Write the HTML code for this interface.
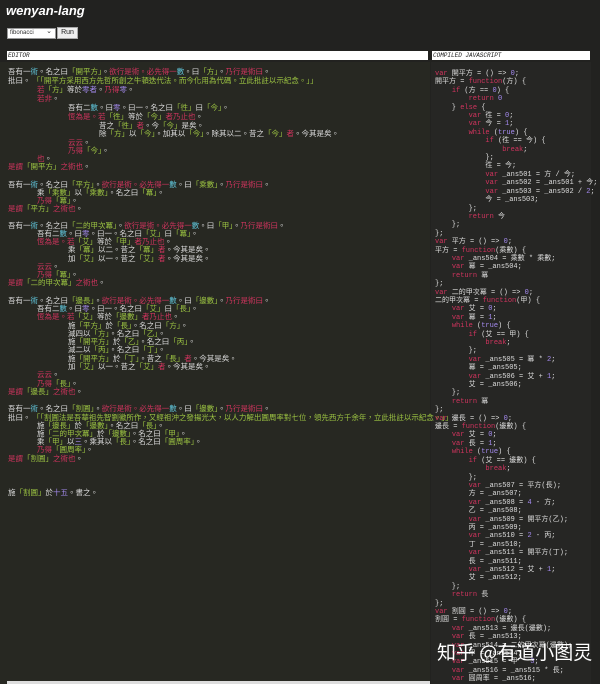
<!DOCTYPE html>
<html><head><meta charset="utf-8"><style>
*{margin:0;padding:0;box-sizing:border-box}
body{width:600px;height:684px;overflow:hidden;background:#222220;font-family:"Liberation Sans","Noto Sans CJK TC",sans-serif;color:#ddd;position:relative}
h1{position:absolute;left:6px;top:3px;font-size:13px;font-style:italic;font-weight:bold;color:#fff}
.sel{position:absolute;left:7px;top:28px;width:49px;height:11px;background:#fff;border:1px solid #999;font-size:6px;color:#333;padding-left:2px;line-height:9px}
.sel:after{content:"⌄";position:absolute;right:3px;top:-2px;font-size:7px}
.run{position:absolute;left:57px;top:27px;width:21px;height:12px;background:#eee;border:1px solid #aaa;font-size:7px;color:#222;text-align:center;line-height:10px}
.bar{position:absolute;top:51px;height:9px;background:#fff;font-family:"Liberation Mono",monospace;font-style:italic;font-size:6px;color:#222;line-height:9px;padding-left:1px}
#ed{position:absolute;left:0;top:62px;width:430px;height:622px;background:#272822}
#js{position:absolute;left:431px;top:62px;width:160px;height:622px;background:#262624}
.l{position:absolute;left:8px;font-size:7.5px;white-space:pre;line-height:8px;color:#ddd}
.j{position:absolute;left:435px;font-family:"Liberation Mono","Noto Sans CJK TC",monospace;font-size:7px;white-space:pre;line-height:8.4px;color:#ddd}
.k{color:#d1345e}.s{color:#9cc442}.n{color:#a58bf0}.t{color:#5fc3d8}
.i1{left:37px}.i2{left:68px}.i3{left:99px}
.wm{position:absolute;left:437px;top:638px;font-size:19px;color:#fff;font-family:"Noto Sans CJK SC",sans-serif}
.bot{position:absolute;left:7px;top:681px;width:423px;height:3px;background:#ddd}
</style></head><body>
<h1>wenyan-lang</h1>
<div class="sel">fibonacci</div><div class="run">Run</div>
<div id="ed"></div><div id="js"></div>
<div class="bar" style="left:7px;width:421px">EDITOR</div>
<div class="bar" style="left:432px;width:158px">COMPILED JAVASCRIPT</div>

<div class="l" style="top:68px">吾有一<span class="t">術</span>。名之曰<span class="s">「開平方」</span>。<span class="k">欲行是術。必先得一</span><span class="t">數</span>。曰<span class="s">「方」</span>。<span class="k">乃行是術曰</span>。</div>
<div class="l" style="top:77px">批曰。 <span class="s">「「開平方采用西方先哲所創之牛頓迭代法。而今化用為代碼。立此批註以示紀念。」」</span></div>
<div class="l i1" style="top:86px"><span class="k">若</span><span class="s">「方」</span>等於<span class="n">零者</span>。<span class="k">乃得</span><span class="n">零</span>。</div>
<div class="l i1" style="top:95px"><span class="k">若非</span>。</div>
<div class="l i2" style="top:104px">吾有二<span class="t">數</span>。曰<span class="n">零</span>。曰一。名之曰<span class="s">「徃」</span>曰<span class="s">「今」</span>。</div>
<div class="l i2" style="top:113px"><span class="k">恆為是。若</span><span class="s">「徃」</span>等於<span class="s">「今」</span><span class="k">者乃止也</span>。</div>
<div class="l i3" style="top:122px">昔之<span class="s">「徃」</span><span class="k">者</span>。今<span class="s">「今」</span>是矣。</div>
<div class="l i3" style="top:130px">除<span class="s">「方」</span>以<span class="s">「今」</span>。加其以<span class="s">「今」</span>。除其以二。昔之<span class="s">「今」</span><span class="k">者</span>。今其是矣。</div>
<div class="l i2" style="top:139px"><span class="k">云云</span>。</div>
<div class="l i2" style="top:147px"><span class="k">乃得</span><span class="s">「今」</span>。</div>
<div class="l i1" style="top:155px"><span class="k">也</span>。</div>
<div class="l" style="top:163px"><span class="k">是謂</span><span class="s">「開平方」</span><span class="k">之術也</span>。</div>

<div class="l" style="top:181px">吾有一<span class="t">術</span>。名之曰<span class="s">「平方」</span>。<span class="k">欲行是術。必先得一</span><span class="t">數</span>。曰<span class="s">「乘數」</span>。<span class="k">乃行是術曰</span>。</div>
<div class="l i1" style="top:189px">乘<span class="s">「乘數」</span>以<span class="s">「乘數」</span>。名之曰<span class="s">「冪」</span>。</div>
<div class="l i1" style="top:197px"><span class="k">乃得</span><span class="s">「冪」</span>。</div>
<div class="l" style="top:205px"><span class="k">是謂</span><span class="s">「平方」</span><span class="k">之術也</span>。</div>

<div class="l" style="top:222px">吾有一<span class="t">術</span>。名之曰<span class="s">「二的甲次冪」</span>。<span class="k">欲行是術。必先得一</span><span class="t">數</span>。曰<span class="s">「甲」</span>。<span class="k">乃行是術曰</span>。</div>
<div class="l i1" style="top:230px">吾有二<span class="t">數</span>。曰<span class="n">零</span>。曰一。名之曰<span class="s">「艾」</span>曰<span class="s">「冪」</span>。</div>
<div class="l i1" style="top:238px"><span class="k">恆為是。若</span><span class="s">「艾」</span>等於<span class="s">「甲」</span><span class="k">者乃止也</span>。</div>
<div class="l i2" style="top:246px">乘<span class="s">「冪」</span>以二。昔之<span class="s">「冪」</span><span class="k">者</span>。今其是矣。</div>
<div class="l i2" style="top:255px">加<span class="s">「艾」</span>以一。昔之<span class="s">「艾」</span><span class="k">者</span>。今其是矣。</div>
<div class="l i1" style="top:263px"><span class="k">云云</span>。</div>
<div class="l i1" style="top:271px"><span class="k">乃得</span><span class="s">「冪」</span>。</div>
<div class="l" style="top:279px"><span class="k">是謂</span><span class="s">「二的甲次冪」</span><span class="k">之術也</span>。</div>

<div class="l" style="top:297px">吾有一<span class="t">術</span>。名之曰<span class="s">「邊長」</span>。<span class="k">欲行是術。必先得一</span><span class="t">數</span>。曰<span class="s">「邊數」</span>。<span class="k">乃行是術曰</span>。</div>
<div class="l i1" style="top:305px">吾有二<span class="t">數</span>。曰<span class="n">零</span>。曰一。名之曰<span class="s">「艾」</span>曰<span class="s">「長」</span>。</div>
<div class="l i1" style="top:313px"><span class="k">恆為是。若</span><span class="s">「艾」</span>等於<span class="s">「邊數」</span><span class="k">者乃止也</span>。</div>
<div class="l i2" style="top:322px">施<span class="s">「平方」</span>於<span class="s">「長」</span>。名之曰<span class="s">「方」</span>。</div>
<div class="l i2" style="top:330px">減四以<span class="s">「方」</span>。名之曰<span class="s">「乙」</span>。</div>
<div class="l i2" style="top:338px">施<span class="s">「開平方」</span>於<span class="s">「乙」</span>。名之曰<span class="s">「丙」</span>。</div>
<div class="l i2" style="top:346px">減二以<span class="s">「丙」</span>。名之曰<span class="s">「丁」</span>。</div>
<div class="l i2" style="top:355px">施<span class="s">「開平方」</span>於<span class="s">「丁」</span>。昔之<span class="s">「長」</span><span class="k">者</span>。今其是矣。</div>
<div class="l i2" style="top:363px">加<span class="s">「艾」</span>以一。昔之<span class="s">「艾」</span><span class="k">者</span>。今其是矣。</div>
<div class="l i1" style="top:371px"><span class="k">云云</span>。</div>
<div class="l i1" style="top:380px"><span class="k">乃得</span><span class="s">「長」</span>。</div>
<div class="l" style="top:388px"><span class="k">是謂</span><span class="s">「邊長」</span><span class="k">之術也</span>。</div>

<div class="l" style="top:405px">吾有一<span class="t">術</span>。名之曰<span class="s">「割圓」</span>。<span class="k">欲行是術。必先得一</span><span class="t">數</span>。曰<span class="s">「邊數」</span>。<span class="k">乃行是術曰</span>。</div>
<div class="l" style="top:414px">批曰。 <span class="s">「「割圓法是吾華祖先智劉徽所作，又經祖沖之發揚光大，以人力解出圓周率對七位，領先西方千余年，立此批註以示紀念。」」</span></div>
<div class="l i1" style="top:422px">施<span class="s">「邊長」</span>於<span class="s">「邊數」</span>。名之曰<span class="s">「長」</span>。</div>
<div class="l i1" style="top:430px">施<span class="s">「二的甲次冪」</span>於<span class="s">「邊數」</span>。名之曰<span class="s">「甲」</span>。</div>
<div class="l i1" style="top:438px">乘<span class="s">「甲」</span>以<span class="n">三</span>。乘其以<span class="s">「長」</span>。名之曰<span class="s">「圓周率」</span>。</div>
<div class="l i1" style="top:446px"><span class="k">乃得</span><span class="s">「圓周率」</span>。</div>
<div class="l" style="top:455px"><span class="k">是謂</span><span class="s">「割圓」</span><span class="k">之術也</span>。</div>

<div class="l" style="top:489px">施<span class="s">「割圓」</span>於<span class="n">十五</span>。書之。</div>

<div class="j" style="top:70px"><span class="k">var</span> 開平方 = () => <span class="n">0</span>;
開平方 = <span class="k">function</span>(方) {
    <span class="k">if</span> (方 == <span class="n">0</span>) {
        <span class="k">return</span> <span class="n">0</span>
    } <span class="k">else</span> {
        <span class="k">var</span> 徃 = <span class="n">0</span>;
        <span class="k">var</span> 今 = <span class="n">1</span>;
        <span class="k">while</span> (<span class="n">true</span>) {
            <span class="k">if</span> (徃 == 今) {
                <span class="k">break</span>;
            };
            徃 = 今;
            <span class="k">var</span> _ans501 = 方 / 今;
            <span class="k">var</span> _ans502 = _ans501 + 今;
            <span class="k">var</span> _ans503 = _ans502 / <span class="n">2</span>;
            今 = _ans503;
        };
        <span class="k">return</span> 今
    };
};
<span class="k">var</span> 平方 = () => <span class="n">0</span>;
平方 = <span class="k">function</span>(乘數) {
    <span class="k">var</span> _ans504 = 乘數 * 乘數;
    <span class="k">var</span> 冪 = _ans504;
    <span class="k">return</span> 冪
};
<span class="k">var</span> 二的甲次冪 = () => <span class="n">0</span>;
二的甲次冪 = <span class="k">function</span>(甲) {
    <span class="k">var</span> 艾 = <span class="n">0</span>;
    <span class="k">var</span> 冪 = <span class="n">1</span>;
    <span class="k">while</span> (<span class="n">true</span>) {
        <span class="k">if</span> (艾 == 甲) {
            <span class="k">break</span>;
        };
        <span class="k">var</span> _ans505 = 冪 * <span class="n">2</span>;
        冪 = _ans505;
        <span class="k">var</span> _ans506 = 艾 + <span class="n">1</span>;
        艾 = _ans506;
    };
    <span class="k">return</span> 冪
};
<span class="k">var</span> 邊長 = () => <span class="n">0</span>;
邊長 = <span class="k">function</span>(邊數) {
    <span class="k">var</span> 艾 = <span class="n">0</span>;
    <span class="k">var</span> 長 = <span class="n">1</span>;
    <span class="k">while</span> (<span class="n">true</span>) {
        <span class="k">if</span> (艾 == 邊數) {
            <span class="k">break</span>;
        };
        <span class="k">var</span> _ans507 = 平方(長);
        方 = _ans507;
        <span class="k">var</span> _ans508 = <span class="n">4</span> - 方;
        乙 = _ans508;
        <span class="k">var</span> _ans509 = 開平方(乙);
        丙 = _ans509;
        <span class="k">var</span> _ans510 = <span class="n">2</span> - 丙;
        丁 = _ans510;
        <span class="k">var</span> _ans511 = 開平方(丁);
        長 = _ans511;
        <span class="k">var</span> _ans512 = 艾 + <span class="n">1</span>;
        艾 = _ans512;
    };
    <span class="k">return</span> 長
};
<span class="k">var</span> 割圓 = () => <span class="n">0</span>;
割圓 = <span class="k">function</span>(邊數) {
    <span class="k">var</span> _ans513 = 邊長(邊數);
    <span class="k">var</span> 長 = _ans513;
    <span class="k">var</span> _ans514 = 二的甲次冪(邊數);
    <span class="k">var</span> 甲 = _ans514;
    <span class="k">var</span> _ans515 = 甲 * <span class="n">3</span>;
    <span class="k">var</span> _ans516 = _ans515 * 長;
    <span class="k">var</span> 圓周率 = _ans516;</div>
<div class="wm">知乎 @有道小图灵</div>
<div class="bot"></div>
</body></html>
